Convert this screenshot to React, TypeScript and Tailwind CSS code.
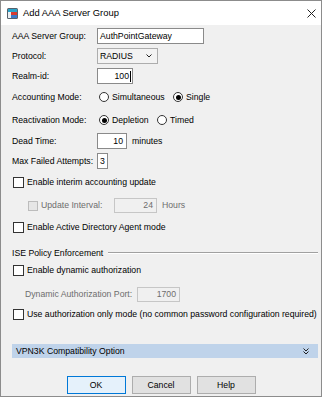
import React from "react";

function Radio({ checked }: { checked?: boolean }) {
  return (
    <span className="w-[10px] h-[10px] rounded-full border border-[#333333] bg-white flex items-center justify-center shrink-0">
      {checked && <span className="w-[5px] h-[5px] rounded-full bg-black" />}
    </span>
  );
}

function Check({ disabled }: { disabled?: boolean }) {
  return (
    <span
      className={
        disabled
          ? "w-[10px] h-[10px] border border-[#bcbcbc] bg-[#e6e6e6] shrink-0"
          : "w-[11px] h-[11px] border border-[#333333] bg-white shrink-0"
      }
    />
  );
}

export default function App() {
  return (
    <div className="w-[322px] h-[397px] bg-[#f0f0f0] border border-[#8c8c8c] flex flex-col font-['Liberation_Sans',Arial,sans-serif] text-[8.7px] text-black leading-none overflow-hidden">
      {/* title bar */}
      <div className="h-[24px] bg-white flex items-center pl-[6px] pr-[5px] shrink-0">
        <svg width="11" height="11" viewBox="0 0 11 11" className="shrink-0">
          <rect x="0" y="0" width="11" height="11" rx="1.5" fill="#55606b" />
          <rect x="1" y="1" width="9" height="3" fill="#2aa3c8" />
          <rect x="1" y="4" width="9" height="3" fill="#d8392e" />
          <rect x="1" y="7" width="9" height="3" fill="#3b78c8" />
          <rect x="1" y="4" width="3" height="6" fill="#e9eef3" />
        </svg>
        <span className="ml-[5px] text-[9.4px] text-black">Add AAA Server Group</span>
        <svg width="9" height="9" viewBox="0 0 9 9" className="ml-auto mr-[0px]">
          <path d="M0.5 0.5 L8.5 8.5 M8.5 0.5 L0.5 8.5" stroke="#222" strokeWidth="1" />
        </svg>
      </div>

      <div className="flex flex-col pl-[11px] pr-[3px]">
        {/* AAA Server Group */}
        <div className="flex items-center h-[16px] mt-[3px]">
          <span className="w-[85px]">AAA Server Group:</span>
          <div className="w-[107px] h-[16px] border border-[#8a8a8a] bg-white flex items-center px-[2px]">
            AuthPointGateway
          </div>
        </div>
        {/* Protocol */}
        <div className="flex items-center h-[16px] mt-[4px]">
          <span className="w-[85px]">Protocol:</span>
          <div className="w-[61px] h-[16px] border border-[#adadad] bg-[#f3f3f3] flex items-center px-[2px]">
            <span>RADIUS</span>
            <svg width="6" height="4" viewBox="0 0 6 4" className="ml-auto mr-[3px]">
              <path d="M0.5 0.5 L3 3 L5.5 0.5" stroke="#222" strokeWidth="1" fill="none" />
            </svg>
          </div>
        </div>
        {/* Realm-id */}
        <div className="flex items-center h-[16px] mt-[4px]">
          <span className="w-[85px]">Realm-id:</span>
          <div className="w-[36px] h-[16px] border border-[#8a8a8a] bg-white flex items-center justify-end pr-[1px]">
            <span>100</span>
            <span className="w-px h-[11px] bg-black ml-[1px]" />
          </div>
        </div>
        {/* Accounting Mode */}
        <div className="flex items-center h-[16px] mt-[5px]">
          <span className="w-[87px]">Accounting Mode:</span>
          <Radio />
          <span className="ml-[3px] w-[61px]">Simultaneous</span>
          <Radio checked />
          <span className="ml-[3px]">Single</span>
        </div>
        {/* Reactivation Mode */}
        <div className="flex items-center h-[16px] mt-[7px]">
          <span className="w-[87px]">Reactivation Mode:</span>
          <Radio checked />
          <span className="ml-[3px] w-[45px]">Depletion</span>
          <Radio />
          <span className="ml-[3px]">Timed</span>
        </div>
        {/* Dead Time */}
        <div className="flex items-center h-[16px] mt-[5px]">
          <span className="w-[85px]">Dead Time:</span>
          <div className="w-[30px] h-[16px] border border-[#8a8a8a] bg-white flex items-center justify-end pr-[3px]">
            10
          </div>
          <span className="ml-[5px]">minutes</span>
        </div>
        {/* Max Failed Attempts */}
        <div className="flex items-center h-[16px] mt-[4px]">
          <span className="w-[85px]">Max Failed Attempts:</span>
          <div className="w-[11px] h-[16px] border border-[#8a8a8a] bg-white flex items-center justify-center">
            3
          </div>
        </div>
        {/* interim accounting */}
        <div className="flex items-center h-[14px] mt-[6px] pl-[1px]">
          <Check />
          <span className="ml-[3px]">Enable interim accounting update</span>
        </div>
        {/* update interval */}
        <div className="flex items-center h-[15px] mt-[9px] pl-[16px] text-[#6d6d6d]">
          <Check disabled />
          <span className="ml-[3px] w-[73px]">Update Interval:</span>
          <div className="w-[43px] h-[15px] border border-[#c6c6c6] bg-[#f0f0f0] flex items-center justify-end pr-[3px]">
            24
          </div>
          <span className="ml-[5px]">Hours</span>
        </div>
        {/* AD agent */}
        <div className="flex items-center h-[14px] mt-[7px] pl-[1px]">
          <Check />
          <span className="ml-[3px]">Enable Active Directory Agent mode</span>
        </div>
        {/* ISE */}
        <div className="flex items-center h-[14px] mt-[12px]">
          <span>ISE Policy Enforcement</span>
          <div className="flex-1 ml-[5px] border-t border-t-[#a0a0a0] border-b border-b-white" />
        </div>
        <div className="flex items-center h-[14px] mt-[3px] pl-[1px]">
          <Check />
          <span className="ml-[3px]">Enable dynamic authorization</span>
        </div>
        <div className="flex items-center h-[15px] mt-[10px] pl-[13px] text-[#6d6d6d]">
          <span className="w-[112px]">Dynamic Authorization Port:</span>
          <div className="w-[43px] h-[15px] border border-[#c6c6c6] bg-[#f0f0f0] flex items-center justify-end pr-[3px]">
            1700
          </div>
        </div>
        <div className="flex items-center h-[14px] mt-[5px] pl-[1px]">
          <Check />
          <span className="ml-[3px]">Use authorization only mode (no common password configuration required)</span>
        </div>
        {/* VPN3K bar */}
        <div className="flex items-center h-[14px] mt-[23px] bg-[#bfd3ea] pl-[4px] pr-[9px]">
          <span>VPN3K Compatibility Option</span>
          <svg width="6" height="7" viewBox="0 0 6 7" className="ml-auto">
            <path d="M0.5 0.5 L3 3 L5.5 0.5 M0.5 3.5 L3 6 L5.5 3.5" stroke="#222" strokeWidth="1" fill="none" />
          </svg>
        </div>
      </div>

      {/* buttons */}
      <div className="flex justify-center gap-[6px] mt-[18px]">
        <button className="w-[59px] h-[18px] border border-[#0078d7] bg-[#e5f1fb] flex items-center justify-center">
          OK
        </button>
        <button className="w-[59px] h-[18px] border border-[#adadad] bg-[#e1e1e1] flex items-center justify-center">
          Cancel
        </button>
        <button className="w-[59px] h-[18px] border border-[#adadad] bg-[#e1e1e1] flex items-center justify-center">
          Help
        </button>
      </div>
    </div>
  );
}
